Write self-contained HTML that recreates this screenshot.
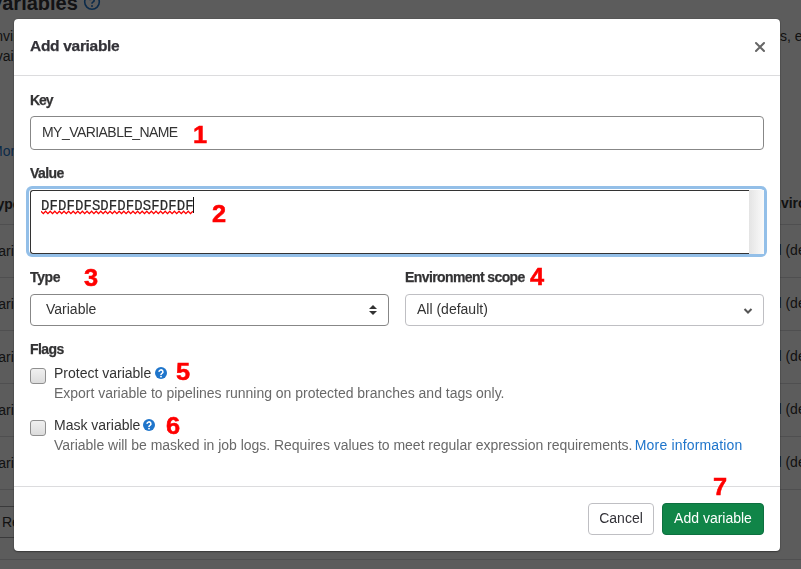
<!DOCTYPE html>
<html><head><meta charset="utf-8">
<style>
*{box-sizing:border-box;margin:0;padding:0}
html,body{width:801px;height:569px;overflow:hidden;background:#fff}
body{font-family:"Liberation Sans",sans-serif;font-size:14px;color:#333;position:relative}
.a{position:absolute;white-space:nowrap}
.bg{position:absolute;left:0;top:0;width:801px;height:569px;background:#fff}
.ov{position:absolute;left:0;top:0;width:801px;height:569px;background:rgba(0,0,0,0.64)}
.row{position:absolute;left:0;width:801px;height:1px;background:#dcdcde}
.modal{position:absolute;left:14px;top:19px;width:766px;height:532px;background:#fff;border-radius:4px;box-shadow:0 0 1px rgba(0,0,0,0.5),0 1px 1.5px rgba(0,0,0,0.35)}
.lbl{font-weight:bold;line-height:20px;font-size:14px;letter-spacing:-0.6px;-webkit-text-stroke:0.25px #333238}
.red{color:#ff0000;font-weight:bold;font-size:23.5px;line-height:23px;-webkit-text-stroke:0.5px #ff0000;transform:scaleX(1.08);transform-origin:0 0}
.inp{position:absolute;border:1px solid #878787;border-radius:4px;background:#fff}
.help{color:#696969;line-height:20px;letter-spacing:-0.02px}
.cb{position:absolute;width:16px;height:16px;border:1px solid #8f8f8f;border-radius:3px;background:linear-gradient(#f0f0f0,#dcdcdc)}
.q{position:absolute;width:12px;height:12px;border-radius:50%;background:#1f75cb;color:#fff;font-size:10px;font-weight:bold;line-height:12px;text-align:center}
.btn{position:absolute;height:32px;border-radius:4px;line-height:28px;text-align:center;font-size:14px}
</style></head><body>
<div class="bg">
  <div class="a" style="left:-10px;top:-9px;font-size:20px;font-weight:bold;line-height:24px;color:#333238">Variables</div>
  <svg class="a" style="left:83px;top:-7px" width="18" height="18" viewBox="0 0 18 18"><circle cx="9" cy="9" r="7.3" stroke="#1f75cb" stroke-width="1.6" fill="none"/><path d="M6.9 7.2a2.1 2.1 0 1 1 3 1.9c-.6.3-.9.7-.9 1.3v.4" stroke="#1f75cb" stroke-width="1.6" fill="none"/><circle cx="9" cy="13" r="1" fill="#1f75cb"/></svg>
  <div class="a" style="left:-14px;top:26px;line-height:20px">Environment variables are applied</div>
  <div class="a" style="left:780px;top:26px;line-height:20px">s, encrypted</div>
  <div class="a" style="left:-12px;top:46px;line-height:20px">available</div>
  <div class="a" style="left:-9px;top:141px;line-height:20px;color:#1f75cb">More information</div>
  <div class="a" style="left:-11px;top:194px;line-height:20px;font-weight:bold">Type</div>
  <div class="a" style="left:763px;top:193px;line-height:20px;font-weight:bold">Environments</div>
  <div class="row" style="top:224px"></div>
  <div class="row" style="top:277px"></div>
  <div class="row" style="top:330px"></div>
  <div class="row" style="top:383px"></div>
  <div class="row" style="top:436px"></div>
  <div class="row" style="top:489px"></div>
  <div class="a" style="left:-10px;top:241px;line-height:20px">Variable</div>
  <div class="a" style="left:-10px;top:294px;line-height:20px">Variable</div>
  <div class="a" style="left:-10px;top:347px;line-height:20px">Variable</div>
  <div class="a" style="left:-10px;top:400px;line-height:20px">Variable</div>
  <div class="a" style="left:-10px;top:453px;line-height:20px">Variable</div>
  <div class="a" style="left:766px;top:240px;line-height:20px">All (default)</div>
  <div class="a" style="left:766px;top:293px;line-height:20px">All (default)</div>
  <div class="a" style="left:766px;top:346px;line-height:20px">All (default)</div>
  <div class="a" style="left:766px;top:399px;line-height:20px">All (default)</div>
  <div class="a" style="left:766px;top:452px;line-height:20px">All (default)</div>
  <div class="a" style="left:-20px;top:506px;width:120px;height:32px;border:1px solid #a0a0a4;border-radius:4px"></div>
  <div class="a" style="left:2px;top:512px;line-height:20px">Reveal values</div>
  <div class="row" style="top:559px"></div>
</div>
<div class="ov"></div>

<div class="modal">
  
  <svg class="a" style="left:740px;top:22px" width="12" height="12" viewBox="0 0 12 12"><path d="M2 2L10 10M10 2L2 10" stroke="#666" stroke-width="2" stroke-linecap="round"/></svg>
  <div class="a" style="left:0;top:56px;width:766px;height:1px;background:#dcdcde"></div>
</div>

<!-- body content in page coords -->
<div style="position:absolute;left:0;top:0;width:801px;height:569px;will-change:transform">
<div class="a" style="left:30px;top:36px;font-size:15.5px;font-weight:bold;line-height:20px;color:#333238;-webkit-text-stroke:0.25px #333238;letter-spacing:-0.3px">Add variable</div>
<div class="a lbl" style="left:30px;top:90px;letter-spacing:-1.1px">Key</div>
<div class="inp" style="left:30px;top:116px;width:734px;height:34px"></div>
<div class="a" style="left:42px;top:122px;line-height:20px;letter-spacing:-0.55px">MY_VARIABLE_NAME</div>
<div class="a red" style="left:193px;top:124px">1</div>

<div class="a lbl" style="left:30px;top:163px">Value</div>
<div class="a" style="left:26px;top:186px;width:741px;height:71px;border-radius:6px;background:#93bfe8"></div>
<div class="a" style="left:29px;top:189px;width:735px;height:65px;border-radius:4px;background:#fff"></div>
<div class="a" style="left:30px;top:190px;width:720px;height:64px;border:1px solid #333;border-right:none;border-radius:3px 0 0 3px;background:#fff"></div>
<div class="a" style="left:749px;top:190px;width:15px;height:64px;background:linear-gradient(90deg,#e4e4e4,#f6f6f6 80%,#fafafa)"></div>
<div class="a" style="left:41px;top:196px;font-family:'Liberation Mono',monospace;line-height:20px;color:#2a2a2a;-webkit-text-stroke:0.2px #2a2a2a;letter-spacing:0.08px">DFDFDFSDFDFDSFDFDF</div>
<svg class="a" style="left:41px;top:210px" width="153" height="5" viewBox="0 0 153 5"><path d="M0 1.2 L2.3 3.6 L4.6 1.2 L6.9 3.6 L9.2 1.2 L11.5 3.6 L13.8 1.2 L16.1 3.6 L18.4 1.2 L20.7 3.6 L23 1.2 L25.3 3.6 L27.6 1.2 L29.9 3.6 L32.2 1.2 L34.5 3.6 L36.8 1.2 L39.1 3.6 L41.4 1.2 L43.7 3.6 L46 1.2 L48.3 3.6 L50.6 1.2 L52.9 3.6 L55.2 1.2 L57.5 3.6 L59.8 1.2 L62.1 3.6 L64.4 1.2 L66.7 3.6 L69 1.2 L71.3 3.6 L73.6 1.2 L75.9 3.6 L78.2 1.2 L80.5 3.6 L82.8 1.2 L85.1 3.6 L87.4 1.2 L89.7 3.6 L92 1.2 L94.3 3.6 L96.6 1.2 L98.9 3.6 L101.2 1.2 L103.5 3.6 L105.8 1.2 L108.1 3.6 L110.4 1.2 L112.7 3.6 L115 1.2 L117.3 3.6 L119.6 1.2 L121.9 3.6 L124.2 1.2 L126.5 3.6 L128.8 1.2 L131.1 3.6 L133.4 1.2 L135.7 3.6 L138 1.2 L140.3 3.6 L142.6 1.2 L144.9 3.6 L147.2 1.2 L149.5 3.6 L151.8 1.2" stroke="#ff0000" stroke-width="1.3" fill="none"/></svg>
<div class="a" style="left:193px;top:197px;width:1px;height:16px;background:#111"></div>
<div class="a red" style="left:212px;top:203px">2</div>

<div class="a lbl" style="left:30px;top:267px;letter-spacing:-0.35px">Type</div>
<div class="a red" style="left:84px;top:267px">3</div>
<div class="inp" style="left:30px;top:294px;width:359px;height:32px"></div>
<div class="a" style="left:46px;top:299px;line-height:20px">Variable</div>
<svg class="a" style="left:368px;top:304px" width="10" height="12" viewBox="0 0 10 12"><path d="M5 1L9 5H1Z M5 11L9 7H1Z" fill="#333"/></svg>

<div class="a lbl" style="left:405px;top:267px">Environment scope</div>
<div class="a red" style="left:530px;top:266px">4</div>
<div class="inp" style="left:405px;top:294px;width:359px;height:32px;border-color:#bfbfc3"></div>
<div class="a" style="left:417px;top:299px;line-height:20px">All (default)</div>
<svg class="a" style="left:743px;top:307px" width="10" height="8" viewBox="0 0 10 8"><path d="M1.5 2L5 5.5L8.5 2" stroke="#555" stroke-width="2" fill="none"/></svg>

<div class="a lbl" style="left:30px;top:339px">Flags</div>
<div class="cb" style="left:30px;top:368px"></div>
<div class="a" style="left:54px;top:363px;line-height:20px">Protect variable</div>
<svg class="a" style="left:155px;top:367px" width="12" height="12" viewBox="0 0 12 12"><circle cx="6" cy="6" r="6" fill="#1f75cb"/><path d="M4.1 4.9a1.9 1.9 0 1 1 2.9 1.5c-.6.35-1 .6-1 1.3v.3" stroke="#fff" stroke-width="1.6" fill="none"/><circle cx="6" cy="9.6" r="0.95" fill="#fff"/></svg>
<div class="a red" style="left:176px;top:361px">5</div>
<div class="a help" style="left:54px;top:383px">Export variable to pipelines running on protected branches and tags only.</div>

<div class="cb" style="left:30px;top:420px"></div>
<div class="a" style="left:54px;top:415px;line-height:20px">Mask variable</div>
<svg class="a" style="left:143px;top:419px" width="12" height="12" viewBox="0 0 12 12"><circle cx="6" cy="6" r="6" fill="#1f75cb"/><path d="M4.1 4.9a1.9 1.9 0 1 1 2.9 1.5c-.6.35-1 .6-1 1.3v.3" stroke="#fff" stroke-width="1.6" fill="none"/><circle cx="6" cy="9.6" r="0.95" fill="#fff"/></svg>
<div class="a red" style="left:166px;top:415px">6</div>
<div class="a help" style="left:54px;top:435px">Variable will be masked in job logs. Requires values to meet regular expression requirements. <span style="color:#1f75cb;letter-spacing:0.17px;margin-left:-1.5px">More information</span></div>

<div class="a" style="left:14px;top:486px;width:766px;height:1px;background:#dcdcde"></div>
<div class="a red" style="left:713px;top:476px">7</div>
<div class="btn" style="left:588px;top:503px;width:66px;border:1px solid #bfbfc3;background:#fff;color:#333238">Cancel</div>
<div class="btn" style="left:662px;top:503px;width:102px;border:1px solid #0d7040;background:#108548;color:#fff">Add variable</div>
</div>
</body></html>
